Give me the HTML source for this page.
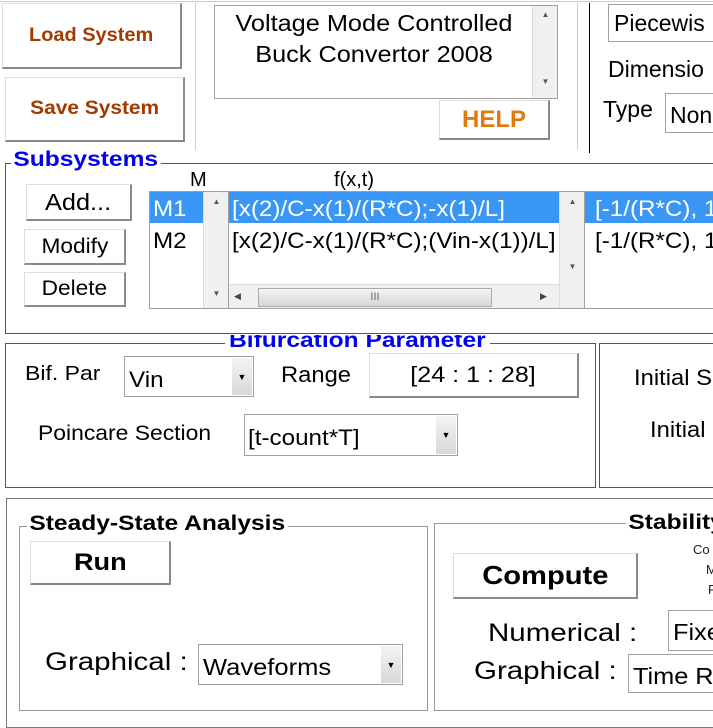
<!DOCTYPE html>
<html><head><meta charset="utf-8"><style>
*{margin:0;padding:0;box-sizing:border-box}
body{width:713px;height:713px;overflow:hidden;background:#fff;font-family:"Liberation Sans",Arial,sans-serif;position:relative;color:#000}
.a{position:absolute}
.btn{position:absolute;background:#fff;border:1px solid #ddd;border-right:2px solid #8a8a8a;border-bottom:2px solid #8a8a8a;display:flex;align-items:center;justify-content:center;white-space:nowrap}
.box{position:absolute;background:#fff;border:1px solid #a0a0a0;overflow:hidden;white-space:nowrap}
.pan{position:absolute;border:1px solid #555}
.pl{position:absolute;border:1px solid #999}
.t{position:absolute;white-space:nowrap;line-height:1;transform-origin:left top}
.s{display:inline-block;transform-origin:left center}
.c{display:inline-block}
.sb{position:absolute;background:#f0f0f0;border-left:1px solid #ddd}
.dd{position:absolute;right:1px;top:1px;bottom:1px;width:20px;background:linear-gradient(#f4f4f4,#d8d8d8);font-size:9px;display:flex;align-items:center;justify-content:center}
.sel{background:#3a96f5;color:#fff}
</style></head><body>
<div class="a" style="left:0;top:1px;width:713px;height:1px;background:#ccc"></div>
<div class="btn" style="left:2px;top:3px;width:180px;height:66px;color:#a33a00;font-weight:bold;font-size:19px"><span class="c" style="transform:scaleX(1.05)">Load System</span></div>
<div class="btn" style="left:5px;top:77px;width:180px;height:65px;color:#a33a00;font-weight:bold;font-size:19px"><span class="c" style="transform:scaleX(1.1)">Save System</span></div>
<div class="a" style="left:195px;top:3px;width:1px;height:147px;background:#ccc"></div>
<div class="box" style="left:214px;top:5px;width:344px;height:94px">
<div class="t" style="left:0;width:318px;top:2px;text-align:center;font-size:23px;line-height:31px"><span class="c" style="transform:scaleX(1.1)">Voltage Mode Controlled</span><br><span class="c" style="transform:scaleX(1.1)">Buck Convertor 2008</span></div>
<div class="sb" style="left:317px;top:0;width:26px;height:93px;font-size:8px;color:#555;text-align:center;padding-top:4px">▲<div style="margin-top:58px">▼</div></div>
</div>
<div class="btn" style="left:439px;top:100px;width:111px;height:40px;color:#e07a10;font-weight:bold;font-size:24px">HELP</div>
<div class="a" style="left:577px;top:3px;width:1px;height:147px;background:#ccc"></div>
<div class="a" style="left:589px;top:3px;width:1px;height:150px;background:#000"></div>
<div class="box" style="left:608px;top:4px;width:110px;height:38px;font-size:23px;padding:5px 0 0 5px">Piecewis</div>
<div class="t" style="left:608px;top:58px;font-size:23px">Dimensio</div>
<div class="t" style="left:603px;top:98px;font-size:23px">Type</div>
<div class="box" style="left:665px;top:93px;width:60px;height:40px;font-size:23px;padding:8px 0 0 4px">Non</div>

<!-- Subsystems -->
<div class="pan" style="left:5px;top:163px;width:720px;height:171px"></div>
<div class="t" style="left:11px;top:149px;font-size:21px;font-weight:bold;color:#0000ee;background:#fff;padding:0 2px;transform:scaleX(1.17)">Subsystems</div>
<div class="t" style="left:190px;top:170px;font-size:20px">M</div>
<div class="t" style="left:334px;top:170px;font-size:20px">f(x,t)</div>
<div class="btn" style="left:26px;top:184px;width:106px;height:37px;font-size:23px"><span class="c" style="transform:scaleX(1.1)">Add...</span></div>
<div class="btn" style="left:24px;top:229px;width:102px;height:36px;font-size:21px"><span class="c" style="transform:scaleX(1.08)">Modify</span></div>
<div class="btn" style="left:24px;top:272px;width:102px;height:35px;font-size:21px"><span class="c" style="transform:scaleX(1.08)">Delete</span></div>
<div class="box" style="left:149px;top:191px;width:80px;height:118px;font-size:22px">
<div class="sel" style="position:absolute;left:0;top:0;width:53px;height:31px;padding:4px 0 0 3px"><span class="s" style="transform:scaleX(1.1)">M1</span></div>
<div style="position:absolute;left:3px;top:36px"><span class="s" style="transform:scaleX(1.1)">M2</span></div>
<div class="sb" style="left:53px;top:0;width:26px;height:117px;font-size:8px;color:#555;text-align:center;padding-top:5px">▲<div style="margin-top:83px">▼</div></div>
</div>
<div class="box" style="left:228px;top:191px;width:357px;height:118px;font-size:22px">
<div class="sel" style="position:absolute;left:0;top:0;width:330px;height:31px;padding:4px 0 0 3px"><span class="s" style="transform:scaleX(1.1)">[x(2)/C-x(1)/(R*C);-x(1)/L]</span></div>
<div style="position:absolute;left:3px;top:36px"><span class="s" style="transform:scaleX(1.1)">[x(2)/C-x(1)/(R*C);(Vin-x(1))/L]</span></div>
<div class="sb" style="left:330px;top:0;width:26px;height:117px;font-size:8px;color:#555;text-align:center;padding-top:5px">▲<div style="margin-top:56px">▼</div></div>
<div style="position:absolute;left:0;top:92px;width:330px;height:25px;background:#f0f0f0;border-top:1px solid #ddd">
<div style="position:absolute;left:5px;top:6px;font-size:9px;color:#444">◀</div>
<div style="position:absolute;left:29px;top:3px;width:234px;height:19px;background:linear-gradient(#f4f4f4,#d6d6d6);border:1px solid #aaa;font-size:11px;text-align:center;color:#666;line-height:17px">III</div>
<div style="position:absolute;left:311px;top:6px;font-size:9px;color:#444">▶</div>
</div>
</div>
<div class="box" style="left:584px;top:191px;width:140px;height:118px;font-size:22px">
<div class="sel" style="position:absolute;left:0;top:0;width:140px;height:31px;padding:4px 0 0 10px"><span class="s" style="transform:scaleX(1.1)">[-1/(R*C), 1</span></div>
<div style="position:absolute;left:10px;top:36px"><span class="s" style="transform:scaleX(1.1)">[-1/(R*C), 1</span></div>
</div>

<!-- Bifurcation -->
<div class="pan" style="left:5px;top:343px;width:591px;height:145px"></div>
<div class="a" style="left:225px;top:335px;width:265px;height:22px;overflow:hidden;background:#fff"><div class="t" style="left:4px;top:-5px;font-size:21px;font-weight:bold;color:#0000ee;transform:scaleX(1.17)">Bifurcation Parameter</div></div>
<div class="t" style="left:25px;top:364px;font-size:20px;transform:scaleX(1.15)">Bif. Par</div>
<div class="box" style="left:124px;top:356px;width:130px;height:41px;font-size:22px;padding:10px 0 0 4px"><span class="s" style="transform:scaleX(1.1)">Vin</span><div class="dd">▼</div></div>
<div class="t" style="left:281px;top:364px;font-size:22px;transform:scaleX(1.08)">Range</div>
<div class="btn" style="left:369px;top:353px;width:210px;height:45px;font-size:22px"><span class="c" style="transform:scaleX(1.14)">[24 : 1 : 28]</span></div>
<div class="t" style="left:38px;top:423px;font-size:21px;transform:scaleX(1.09)">Poincare Section</div>
<div class="box" style="left:244px;top:414px;width:214px;height:42px;font-size:22px;padding:10px 0 0 3px"><span class="s" style="transform:scaleX(1.1)">[t-count*T]</span><div class="dd">▼</div></div>
<div class="pan" style="left:599px;top:343px;width:130px;height:145px"></div>
<div class="t" style="left:634px;top:367px;font-size:22px;transform:scaleX(1.08)">Initial S</div>
<div class="t" style="left:650px;top:419px;font-size:22px;transform:scaleX(1.08)">Initial</div>

<!-- bottom -->
<div class="pan" style="left:6px;top:498px;width:720px;height:230px;border-color:#777"></div>
<div class="pl" style="left:19px;top:526px;width:409px;height:185px"></div>
<div class="t" style="left:27px;top:513px;font-size:21px;font-weight:bold;background:#fff;padding:0 2px;transform:scaleX(1.17)">Steady-State Analysis</div>
<div class="btn" style="left:30px;top:541px;width:141px;height:44px;font-size:24px;font-weight:bold"><span class="c" style="transform:scaleX(1.13)">Run</span></div>
<div class="t" style="left:45px;top:650px;font-size:25px;transform:scaleX(1.18)">Graphical :</div>
<div class="box" style="left:198px;top:644px;width:205px;height:41px;font-size:23px;padding:9px 0 0 4px"><span class="s" style="transform:scaleX(1.11)">Waveforms</span><div class="dd">▼</div></div>
<div class="pl" style="left:434px;top:523px;width:290px;height:188px"></div>
<div class="t" style="left:626px;top:512px;font-size:21px;font-weight:bold;background:#fff;padding:0 2px;transform:scaleX(1.17)">Stability</div>
<div class="btn" style="left:453px;top:553px;width:185px;height:46px;font-size:26px;font-weight:bold"><span class="c" style="transform:scaleX(1.12)">Compute</span></div>
<div class="t" style="left:693px;top:543px;font-size:13px;color:#222">Co</div>
<div class="t" style="left:706px;top:563px;font-size:13px;color:#222">M</div>
<div class="t" style="left:708px;top:583px;font-size:13px;color:#222">F</div>
<div class="t" style="left:488px;top:621px;font-size:25px;transform:scaleX(1.18)">Numerical :</div>
<div class="box" style="left:668px;top:610px;width:60px;height:41px;font-size:23px;padding:8px 0 0 4px"><span class="s" style="transform:scaleX(1.1)">Fixe</span></div>
<div class="t" style="left:474px;top:659px;font-size:25px;transform:scaleX(1.18)">Graphical :</div>
<div class="box" style="left:628px;top:654px;width:100px;height:39px;font-size:23px;padding:8px 0 0 4px"><span class="s" style="transform:scaleX(1.1)">Time R</span></div>
</body></html>
